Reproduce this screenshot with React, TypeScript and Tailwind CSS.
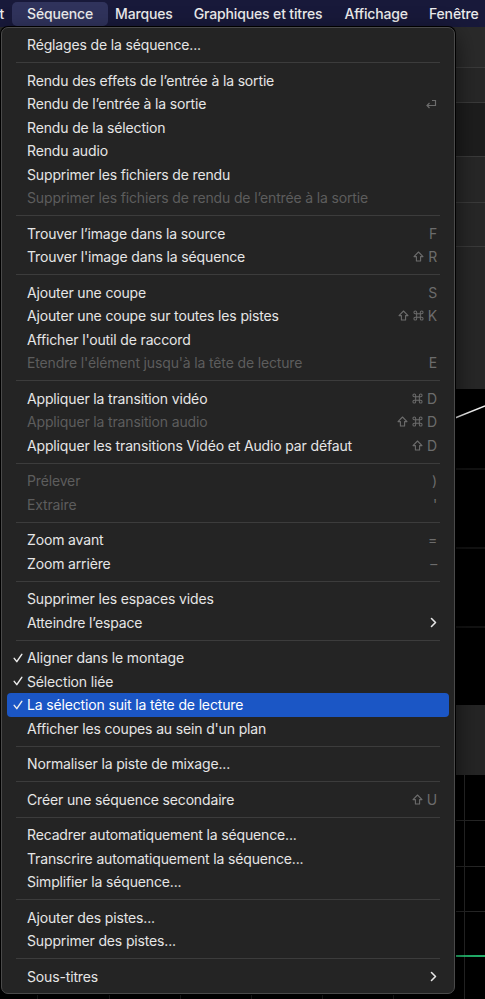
import React from "react";

type Item =
  | { t: "sep" }
  | { t: "item"; label: string; disabled?: boolean; check?: boolean; active?: boolean; sc?: React.ReactNode; sub?: boolean };

const Shift = () => (
  <svg width="11" height="11" viewBox="0 0 11 11" className="inline-block">
    <path d="M5.5 1 L10 5.6 H7.6 V10 H3.4 V5.6 H1 Z" fill="none" stroke="currentColor" strokeWidth="1.1" strokeLinejoin="round" />
  </svg>
);
const Cmd = () => (
  <svg width="11" height="11" viewBox="0 0 12 12" className="inline-block">
    <path
      d="M4 4 H8 V8 H4 Z M4 4 V2.5 A1.5 1.5 0 1 0 2.5 4 H4 M8 4 V2.5 A1.5 1.5 0 1 1 9.5 4 H8 M4 8 V9.5 A1.5 1.5 0 1 1 2.5 8 H4 M8 8 V9.5 A1.5 1.5 0 1 0 9.5 8 H8"
      fill="none"
      stroke="currentColor"
      strokeWidth="1.1"
    />
  </svg>
);
const Ret = () => (
  <svg width="12" height="10" viewBox="0 0 12 10">
    <path d="M7 1.5 H10.5 V6.5 H2" fill="none" stroke="currentColor" strokeWidth="1.2" />
    <path d="M4.5 4 L2 6.5 L4.5 9" fill="none" stroke="currentColor" strokeWidth="1.2" />
  </svg>
);
const Chev = () => (
  <svg width="7" height="11" viewBox="0 0 7 11">
    <path d="M1.5 1.5 L5.5 5.5 L1.5 9.5" fill="none" stroke="#e6e6e6" strokeWidth="1.6" strokeLinecap="round" strokeLinejoin="round" />
  </svg>
);
const Check = () => (
  <svg width="10" height="10" viewBox="0 0 10 10">
    <path d="M1.2 5.4 L3.8 8.6 L8.8 1.4" fill="none" stroke="#ececec" strokeWidth="1.5" strokeLinecap="round" strokeLinejoin="round" />
  </svg>
);

const K = ({ children }: { children: React.ReactNode }) => <span className="flex items-center gap-[4px]">{children}</span>;

const items: Item[] = [
  { t: "item", label: "Réglages de la séquence..." },
  { t: "sep" },
  { t: "item", label: "Rendu des effets de l’entrée à la sortie" },
  { t: "item", label: "Rendu de l’entrée à la sortie", sc: <Ret /> },
  { t: "item", label: "Rendu de la sélection" },
  { t: "item", label: "Rendu audio" },
  { t: "item", label: "Supprimer les fichiers de rendu" },
  { t: "item", label: "Supprimer les fichiers de rendu de l’entrée à la sortie", disabled: true },
  { t: "sep" },
  { t: "item", label: "Trouver l’image dans la source", sc: <K>F</K> },
  { t: "item", label: "Trouver l'image dans la séquence", sc: <K><Shift /> R</K> },
  { t: "sep" },
  { t: "item", label: "Ajouter une coupe", sc: <K>S</K> },
  { t: "item", label: "Ajouter une coupe sur toutes les pistes", sc: <K><Shift /><Cmd /> K</K> },
  { t: "item", label: "Afficher l'outil de raccord" },
  { t: "item", label: "Etendre l'élément jusqu'à la tête de lecture", disabled: true, sc: <K>E</K> },
  { t: "sep" },
  { t: "item", label: "Appliquer la transition vidéo", sc: <K><Cmd /> D</K> },
  { t: "item", label: "Appliquer la transition audio", disabled: true, sc: <K><Shift /><Cmd /> D</K> },
  { t: "item", label: "Appliquer les transitions Vidéo et Audio par défaut", sc: <K><Shift /> D</K> },
  { t: "sep" },
  { t: "item", label: "Prélever", disabled: true, sc: <K>)</K> },
  { t: "item", label: "Extraire", disabled: true, sc: <K>'</K> },
  { t: "sep" },
  { t: "item", label: "Zoom avant", sc: <K>=</K> },
  { t: "item", label: "Zoom arrière", sc: <K>–</K> },
  { t: "sep" },
  { t: "item", label: "Supprimer les espaces vides" },
  { t: "item", label: "Atteindre l’espace", sub: true },
  { t: "sep" },
  { t: "item", label: "Aligner dans le montage", check: true },
  { t: "item", label: "Sélection liée", check: true },
  { t: "item", label: "La sélection suit la tête de lecture", check: true, active: true },
  { t: "item", label: "Afficher les coupes au sein d'un plan" },
  { t: "sep" },
  { t: "item", label: "Normaliser la piste de mixage..." },
  { t: "sep" },
  { t: "item", label: "Créer une séquence secondaire", sc: <K><Shift /> U</K> },
  { t: "sep" },
  { t: "item", label: "Recadrer automatiquement la séquence..." },
  { t: "item", label: "Transcrire automatiquement la séquence..." },
  { t: "item", label: "Simplifier la séquence..." },
  { t: "sep" },
  { t: "item", label: "Ajouter des pistes..." },
  { t: "item", label: "Supprimer des pistes..." },
  { t: "sep" },
  { t: "item", label: "Sous-titres", sub: true },
];

const font = { fontFamily: "Inter, 'Noto Sans', sans-serif" };

export default function App() {
  return (
    <div className="relative w-[485px] h-[999px] overflow-hidden bg-black text-[14px] tracking-[-0.15px]" style={font}>
      {/* menu bar */}
      <div className="h-[27px] bg-[#18193a] flex items-center text-[#ececec] text-[14px] font-medium whitespace-nowrap">
        <span className="w-[12px] shrink-0 overflow-hidden flex justify-end pr-[8px]">t</span>
        <span className="shrink-0 h-[24px] px-[15px] rounded-[5px] bg-[#30335c] flex items-center">Séquence</span>
        <span className="shrink-0 ml-[7px]">Marques</span>
        <span className="shrink-0 ml-[21px]">Graphiques et titres</span>
        <span className="shrink-0 ml-[22px]">Affichage</span>
        <span className="shrink-0 ml-[21px]">Fenêtre</span>
      </div>

      {/* background application panels */}
      <div className="flex flex-col">
        <div className="h-[41px] bg-[#2a2a2a] border-b border-[#3a3a3a]" />
        <div className="h-[35px] bg-[#272727] border-b border-[#3a3a3a]" />
        <div className="h-[54px] bg-[#1d1d1d] border-b border-[#3a3a3a]" />
        <div className="h-[46px] bg-[#272727] border-b border-[#3a3a3a]" />
        <div className="h-[44px] bg-[#272727] border-b border-[#3a3a3a]" />
        <div className="h-[142px] bg-[#272727]" />
        <div className="h-[316px] bg-black">
          <svg width="485" height="316" className="block">
            <line x1="0" x2="485" y1="80" y2="80" stroke="#252525" />
            <line x1="0" x2="485" y1="159" y2="159" stroke="#252525" />
            <line x1="0" x2="485" y1="238" y2="238" stroke="#252525" />
            <line x1="440" y1="35" x2="485" y2="17" stroke="#f0f0f0" strokeWidth="1.5" />
          </svg>
        </div>
        <div className="h-[70px] bg-[#252525]" />
        <div className="h-[224px] bg-black">
          <svg width="485" height="224" className="block">
            {[37, 109, 180, 251, 322, 393, 464].map((x) => (
              <line key={x} x1={x + 0.5} x2={x + 0.5} y1="0" y2="224" stroke="#262626" />
            ))}
            {[45, 91, 136].map((y) => (
              <line key={y} x1="0" x2="485" y1={y + 0.5} y2={y + 0.5} stroke="#262626" />
            ))}
            <line x1="0" x2="485" y1="181" y2="181" stroke="#2ee88c" strokeWidth="1.5" />
          </svg>
        </div>
      </div>

      {/* dropdown menu */}
      <div className="absolute left-[1px] top-[27px] w-[454px] rounded-[7px] bg-[#242424] border border-[#4a4a4a] shadow-[0_0_0_1px_#000,0_8px_24px_rgba(0,0,0,0.6)] px-[5px] py-[5px]">
        {items.map((it, i) =>
          it.t === "sep" ? (
            <div key={i} className="h-[12px] flex items-center px-[9px]">
              <div className="h-[1px] w-full bg-[#3c3c3c]" />
            </div>
          ) : (
            <div
              key={i}
              className={
                "h-[23.5px] flex items-center rounded-[4px] pr-[12px] " +
                (it.active ? "bg-[#1b56c5] text-white" : it.disabled ? "text-[#5d5d5d]" : "text-[#e6e6e6]")
              }
            >
              <div className="w-[20px] flex justify-center pl-[1px]">{it.check ? <Check /> : null}</div>
              <div className="flex-1 whitespace-nowrap">{it.label}</div>
              {it.sc ? <div className="text-[#6c6c6c] flex items-center">{it.sc}</div> : null}
              {it.sub ? <Chev /> : null}
            </div>
          )
        )}
      </div>
    </div>
  );
}
